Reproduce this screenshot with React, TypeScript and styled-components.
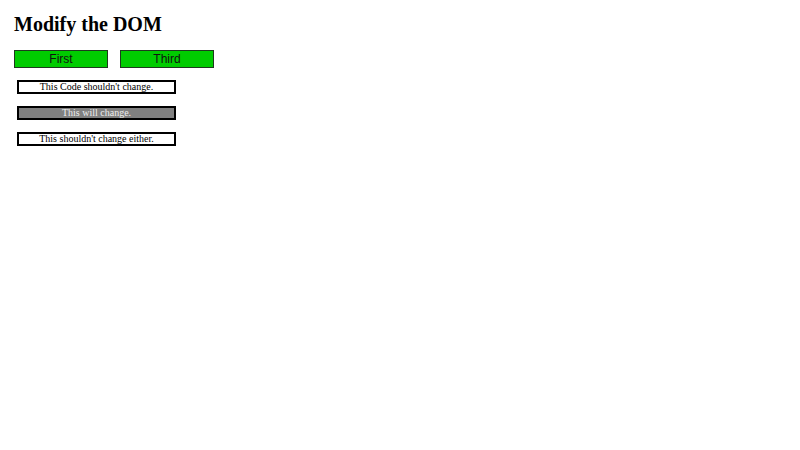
import styled, { createGlobalStyle } from "styled-components";

const GlobalStyle = createGlobalStyle`
  body {
    margin: 0;
    background: #ffffff;
  }
`;

export default function App() {
  return (
    <>
      <GlobalStyle />
      <Page>
        <Title>Modify the DOM</Title>
        <ButtonRow>
          <GreenButton>First</GreenButton>
          <GreenButton>Third</GreenButton>
        </ButtonRow>
        <BoxList>
          <Box>This Code shouldn't change.</Box>
          <Box $dark>This will change.</Box>
          <Box>This shouldn't change either.</Box>
        </BoxList>
      </Page>
    </>
  );
}

const Page = styled.div`
  padding: 13px 14px;
  display: flex;
  flex-direction: column;
  align-items: flex-start;
`;

const Title = styled.h1`
  margin: 0;
  font-family: "Liberation Serif", "Times New Roman", serif;
  font-weight: 700;
  font-size: 20px;
  line-height: 23px;
  color: #000000;
`;

const ButtonRow = styled.div`
  display: flex;
  gap: 12px;
  margin-top: 14px;
`;

const GreenButton = styled.button`
  box-sizing: border-box;
  width: 94px;
  height: 18px;
  padding: 0;
  background-color: #00cc00;
  border: 1px solid #1e3a1e;
  font-family: "Liberation Sans", Arial, sans-serif;
  font-size: 12px;
  line-height: 16px;
  color: #111111;
`;

const BoxList = styled.div`
  display: flex;
  flex-direction: column;
  gap: 12px;
  margin: 12px 0 0 3px;
`;

const Box = styled.div<{ $dark?: boolean }>`
  box-sizing: border-box;
  width: 159px;
  height: 14px;
  border: 2px solid #000000;
  background-color: ${(p) => (p.$dark ? "#808080" : "#ffffff")};
  color: ${(p) => (p.$dark ? "#eeeeee" : "#000000")};
  font-family: "Liberation Serif", "Times New Roman", serif;
  font-size: 10px;
  line-height: 10px;
  text-align: center;
  white-space: nowrap;
`;
